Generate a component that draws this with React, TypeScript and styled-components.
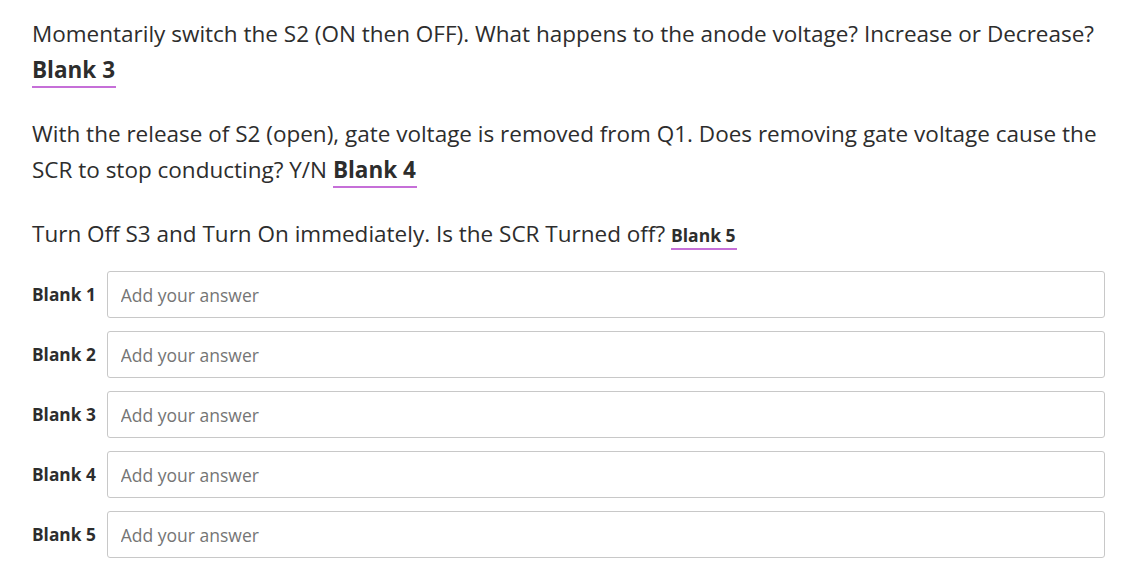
import React from "react";
import styled, { createGlobalStyle } from "styled-components";

const Global = createGlobalStyle`
  html, body { margin: 0; padding: 0; background: #ffffff; }
  body { font-family: "Open Sans", "Noto Sans", sans-serif; color: #2d2d2d; }
`;

const Page = styled.div`
  padding: 16px 33px 0 32px;
  display: flex;
  flex-direction: column;
`;

const Question = styled.p`
  margin: 0 0 28px 0;
  font-size: 22.5px;
  line-height: 36px;
  color: #2d2d2d;
`;

const BlankRef = styled.span<{ $small?: boolean }>`
  display: inline-block;
  font-weight: 700;
  font-size: ${(p) => (p.$small ? "17.5px" : "22.5px")};
  line-height: ${(p) => (p.$small ? "22px" : "28px")};
  border-bottom: 2px solid #c66fd8;
  padding-bottom: 2px;
  padding-right: 1px;
`;

const Answers = styled.div`
  display: flex;
  flex-direction: column;
  gap: 13px;
  margin-top: -9px;
`;

const Row = styled.label`
  display: flex;
  align-items: center;
  gap: 11px;
`;

const Label = styled.span`
  font-size: 17.3px;
  font-weight: 700;
  color: #2d2d2d;
  white-space: nowrap;
`;

const Input = styled.input`
  flex: 1;
  height: 47px;
  box-sizing: border-box;
  border: 1px solid #c8c8c8;
  border-radius: 3px;
  padding: 0 13px;
  font-family: "Open Sans", "Noto Sans", sans-serif;
  font-size: 17.5px;
  color: #2d2d2d;
  background: #fff;
  outline: none;
  &::placeholder { color: #757575; }
`;

export default function App() {
  const blanks = [1, 2, 3, 4, 5];
  return (
    <>
      <Global />
      <Page>
        <Question>
          Momentarily switch the S2 (ON then OFF). What happens to the anode voltage? Increase or Decrease?{" "}
          <BlankRef>Blank 3</BlankRef>
        </Question>
        <Question>
          With the release of S2 (open), gate voltage is removed from Q1. Does removing gate voltage cause the
          SCR to stop conducting? Y/N <BlankRef>Blank 4</BlankRef>
        </Question>
        <Question>
          Turn Off S3 and Turn On immediately. Is the SCR Turned off? <BlankRef $small>Blank 5</BlankRef>
        </Question>
        <Answers>
          {blanks.map((n) => (
            <Row key={n}>
              <Label>Blank {n}</Label>
              <Input placeholder="Add your answer" />
            </Row>
          ))}
        </Answers>
      </Page>
    </>
  );
}
